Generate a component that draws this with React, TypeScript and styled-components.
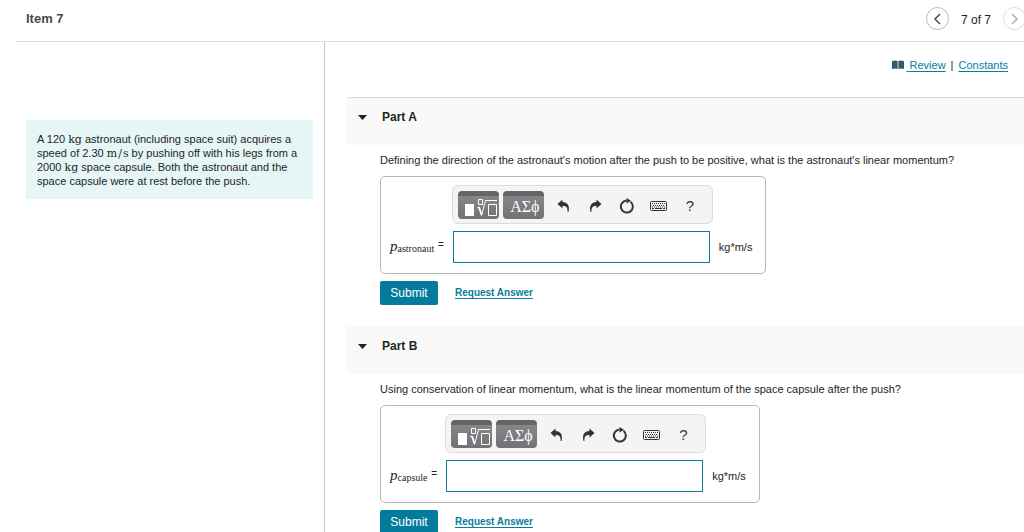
import React from "react";
import styled, { createGlobalStyle } from "styled-components";

const GlobalStyle = createGlobalStyle`
  * { box-sizing: border-box; }
  body {
    margin: 0;
    background: #fff;
    color: #252525;
    font: 11px/14px "Liberation Sans", Arial, sans-serif;
  }
  button, input { font: inherit; color: inherit; }
`;

const Page = styled.div`
  display: flex;
  flex-direction: column;
  height: 100vh;
  overflow: hidden;
`;

const Header = styled.header`
  display: flex;
  align-items: center;
  justify-content: space-between;
  flex: none;
  height: 42px;
  margin: 0 -2px 0 15px;
  padding: 0 0 4px 11px;
  border-bottom: 1px solid #dedede;
`;

const Title = styled.h1`
  margin: 0;
  font-size: 13px;
  line-height: 16px;
  color: #4a4a4a;
`;

const Pager = styled.nav`
  display: flex;
  align-items: center;
  gap: 12px;
  font-size: 12px;
`;

const PagerCount = styled.span`
  padding-top: 3px;
`;

const RoundButton = styled.button`
  display: grid;
  place-items: center;
  width: 23px;
  height: 23px;
  padding: 0;
  border: 1px solid #bababa;
  border-radius: 50%;
  background: #fff;
  color: #555;
  &:disabled { border-color: #dcdcdc; color: #b5b5b5; }
`;

const Columns = styled.div`
  display: flex;
  flex: 1;
  min-height: 0;
`;

const Sidebar = styled.aside`
  flex: none;
  width: 325px;
  padding: 78px 11px 0 26px;
  border-right: 1px solid #b4c9d9;
`;

const Problem = styled.p`
  margin: 0;
  padding: 12px 11px 11px;
  background: #e6f6f7;
`;

const Unit = styled.span`
  font: 11px/12px "DejaVu Serif", serif;
`;

const Slash = styled.span`
  padding: 0 1px;
`;

const Main = styled.main`
  flex: 1;
  min-width: 0;
  padding-left: 22px;
`;

const Resources = styled.div`
  display: flex;
  align-items: center;
  justify-content: flex-end;
  gap: 5px;
  height: 55px;
  padding: 0 16px 10px 0;
`;

const ReviewGroup = styled.span`
  display: flex;
  align-items: center;
  gap: 2px;
`;

const Link = styled.a<{ $strong?: boolean }>`
  color: #0a7c9c;
  font-weight: ${(p) => (p.$strong ? "bold" : "normal")};
  font-size: ${(p) => (p.$strong ? "10px" : "11px")};
  text-underline-offset: 2px;
`;

const PartSection = styled.section`
  margin-bottom: 21px;
`;

const PartHeader = styled.header<{ $ruled?: boolean }>`
  display: flex;
  align-items: center;
  gap: 15px;
  height: 48px;
  padding: 0 11px 9px;
  border-top: 1px solid ${(p) => (p.$ruled ? "#dcdcdc" : "#f9f9f9")};
  background: #f9f9f9;
`;

const PartTitle = styled.h2`
  margin: 0;
  font-size: 12px;
  line-height: 14px;
`;

const Toggle = styled.button`
  display: block;
  padding: 0;
  border: 0;
  background: none;
  line-height: 0;
`;

const PartBody = styled.div`
  padding: 8px 16px 0 33px;
`;

const Question = styled.p`
  margin: 0 0 9px;
`;

const AnswerBox = styled.div`
  display: grid;
  grid-template-columns: auto 257px auto;
  align-items: center;
  align-content: start;
  gap: 7px 9px;
  width: fit-content;
  height: 98px;
  padding: 8px 13px 9px 9px;
  border: 1px solid #b8b8b8;
  border-radius: 5px;
`;

const Toolbar = styled.div`
  grid-column: 2;
  display: flex;
  align-items: center;
  gap: 4px;
  width: 261px;
  height: 39px;
  margin-left: -1px;
  margin-right: -3px;
  padding: 0 6px 0 5px;
  border: 1px solid #dcdcdc;
  border-radius: 6px;
  background: #f4f4f4;
`;

const PaletteButton = styled.button`
  display: grid;
  place-items: center;
  width: 41px;
  height: 28px;
  padding: 0;
  border: 0;
  border-radius: 4px;
  background: linear-gradient(#656565 0 5px, #85858a 5px, #727276 100%);
  color: #fff;
`;

const Symbols = styled.span`
  padding: 5px 0 0 3px;
  font: 16px/20px "Liberation Serif", "Times New Roman", serif;
`;

const Tools = styled.div`
  display: flex;
  flex: 1;
  padding-top: 3px;
`;

const Tool = styled.button`
  display: grid;
  place-items: center;
  flex: 1;
  height: 28px;
  padding: 0;
  border: 0;
  background: none;
  color: #333;
  font-size: 15px;
`;

const Label = styled.label`
  grid-column: 1;
  font-size: 10px;
  white-space: nowrap;
`;

const Variable = styled.i`
  font: italic 15px/14px "Liberation Serif", "Times New Roman", serif;
  vertical-align: -3px;
`;

const Subscript = styled.span`
  padding-right: 1px;
  font: 10px/14px "Liberation Serif", "Times New Roman", serif;
  vertical-align: -4px;
`;

const AnswerInput = styled.input`
  width: 257px;
  height: 32px;
  padding: 0 6px;
  border: 1px solid #087b9b;
  background: #fff;
`;

const Actions = styled.div`
  display: flex;
  align-items: center;
  gap: 17px;
  margin-top: 7px;
`;

const Submit = styled.button`
  width: 58px;
  height: 24px;
  padding: 0;
  border: 0;
  border-radius: 2px;
  background: #047a9c;
  color: #fff;
  font-size: 12px;
`;

const Chevron = ({ right = false }: { right?: boolean }) => (
  <svg width="9" height="12" viewBox="0 0 9 12" fill="none" stroke="currentColor" strokeWidth="1.6">
    <path d={right ? "M2 1l5 5-5 5" : "M7 1L2 6l5 5"} />
  </svg>
);

const BookIcon = () => (
  <svg width="12" height="10" viewBox="0 0 12 10" fill="#315a70">
    <path d="M0 1.200Q3 0 5.600 1v8Q3 8 0 9zM6.400 1Q9 0 12 1.200V9Q9 8 6.400 9z" />
  </svg>
);

const TemplateIcon = () => (
  <svg width="41" height="28" viewBox="0 0 41 28" fill="none" stroke="#fff">
    <path d="M7 13h9v12H7z" fill="#fff" stroke="none" />
    <path d="M20.500 8.500h4v5h-4z" />
    <path d="M19 17l2-1" />
    <path d="M21 16l2.500 8" strokeWidth="1.800" />
    <path d="M23.500 24.500L27.500 9.500H39" />
    <path d="M30.500 13.500h8v11h-8z" />
  </svg>
);

const ArrowIcon = ({ forward = false }: { forward?: boolean }) => (
  <svg width="13" height="14" viewBox="0 0 13 14" fill="currentColor">
    <path
      transform={forward ? "translate(13 0) scale(-1 1)" : undefined}
      d="M5.500.5L.5 5l5 4.500V7.100c3.400-.2 5.300 1.200 5.100 5.900h.9C13 7 10.800 3.200 5.500 3z"
    />
  </svg>
);

const ResetIcon = () => (
  <svg width="16" height="16" viewBox="0 0 16 16">
    <path d="M11.500 3.800A6 6 0 1 1 7.500 2.600" fill="none" stroke="currentColor" strokeWidth="2" />
    <path d="M7.500 0l4.500 2.800-4.500 2.700z" fill="currentColor" />
  </svg>
);

const KeyboardIcon = () => (
  <svg width="17" height="10" viewBox="0 0 17 10" fill="none" stroke="currentColor">
    <rect x=".5" y=".5" width="16" height="9" rx="1" />
    <path d="M2 2.500h13M3 4.500h12M2 6h13" strokeDasharray="1 1" />
    <path d="M2 7.500h2M5 7.500h7M13 7.500h2" />
  </svg>
);

type PartProps = {
  id: string;
  title: string;
  question: string;
  subscript: string;
  ruled?: boolean;
};

const Part = ({ id, title, question, subscript, ruled }: PartProps) => (
  <PartSection>
    <PartHeader $ruled={ruled}>
      <Toggle type="button" aria-label={`Collapse ${title}`}>
        <svg width="9" height="5" viewBox="0 0 9 5" fill="#222">
          <path d="M0 0h9L4.500 5z" />
        </svg>
      </Toggle>
      <PartTitle>{title}</PartTitle>
    </PartHeader>
    <PartBody>
      <Question>{question}</Question>
      <AnswerBox>
        <Toolbar>
          <PaletteButton type="button" aria-label="Templates">
            <TemplateIcon />
          </PaletteButton>
          <PaletteButton type="button">
            <Symbols>ΑΣϕ</Symbols>
          </PaletteButton>
          <Tools>
            <Tool type="button" aria-label="Undo"><ArrowIcon /></Tool>
            <Tool type="button" aria-label="Redo"><ArrowIcon forward /></Tool>
            <Tool type="button" aria-label="Reset"><ResetIcon /></Tool>
            <Tool type="button" aria-label="Keyboard shortcuts"><KeyboardIcon /></Tool>
            <Tool type="button">?</Tool>
          </Tools>
        </Toolbar>
        <Label htmlFor={id}>
          <Variable>p</Variable>
          <Subscript>{subscript}</Subscript> =
        </Label>
        <AnswerInput id={id} type="text" />
        <span>kg*m/s</span>
      </AnswerBox>
      <Actions>
        <Submit type="button">Submit</Submit>
        <Link href="#answer" $strong>Request Answer</Link>
      </Actions>
    </PartBody>
  </PartSection>
);

export default function App() {
  return (
    <Page>
      <GlobalStyle />
      <Header>
        <Title>Item 7</Title>
        <Pager>
          <RoundButton type="button" aria-label="Previous item"><Chevron /></RoundButton>
          <PagerCount>7 of 7</PagerCount>
          <RoundButton type="button" aria-label="Next item" disabled><Chevron right /></RoundButton>
        </Pager>
      </Header>
      <Columns>
        <Sidebar>
          <Problem>
            A 120 <Unit>kg</Unit> astronaut (including space suit) acquires a speed of 2.30{" "}
            <Unit>m<Slash>/</Slash>s</Unit> by pushing off with his legs from a 2000{" "}
            <Unit>kg</Unit> space capsule. Both the astronaut and the space capsule were at rest
            before the push.
          </Problem>
        </Sidebar>
        <Main>
          <Resources>
            <ReviewGroup>
              <BookIcon />
              <Link href="#review">{"\u00a0"}Review</Link>
            </ReviewGroup>
            <span>|</span>
            <Link href="#constants">Constants</Link>
          </Resources>
          <Part
            id="astronaut"
            title="Part A"
            question="Defining the direction of the astronaut's motion after the push to be positive, what is the astronaut's linear momentum?"
            subscript="astronaut"
            ruled
          />
          <Part
            id="capsule"
            title="Part B"
            question="Using conservation of linear momentum, what is the linear momentum of the space capsule after the push?"
            subscript="capsule"
          />
        </Main>
      </Columns>
    </Page>
  );
}
